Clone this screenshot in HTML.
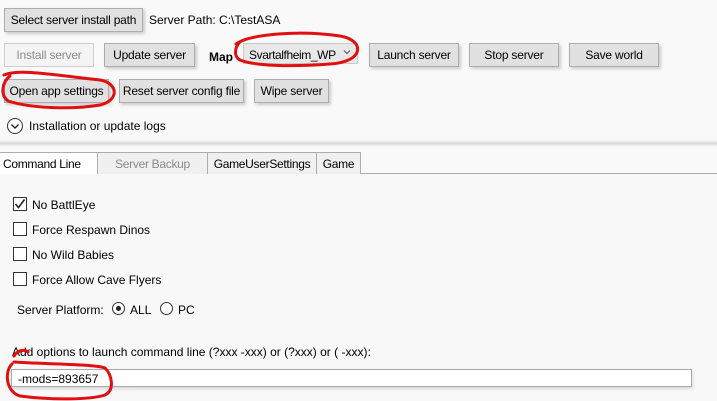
<!DOCTYPE html>
<html><head><meta charset="utf-8"><style>
*{margin:0;padding:0;box-sizing:border-box}
body{width:717px;height:401px;background:#f9f9f9;font-family:"Liberation Sans",sans-serif;font-size:12px;color:#000;position:relative;overflow:hidden}
.a{position:absolute;white-space:nowrap}
.b{position:absolute;background:#e1e1e1;border:1px solid #adadad;display:flex;align-items:center;justify-content:center;box-shadow:2px 2px 3px rgba(0,0,0,.18);font-size:12px;letter-spacing:-.2px}
.dis{background:#f4f4f4;border-color:#cfcfcf;color:#8d8d8d;box-shadow:none}
.cb{position:absolute;width:14px;height:14px;border:1px solid #333;background:#fff;left:13px}
.t{position:absolute;top:152px;height:22px;border:1px solid #adadad;border-bottom:none;background:#f0f0f0;display:flex;align-items:center;justify-content:center;font-size:12px;letter-spacing:-.3px}
</style></head><body>
<div class="b" style="left:4px;top:8px;width:139px;height:24px">Select server install path</div>
<div class="a" style="left:149px;top:13px">Server Path: C:\TestASA</div>

<div class="b dis" style="left:4px;top:43px;width:90px;height:24px">Install server</div>
<div class="b" style="left:104px;top:43px;width:91px;height:24px">Update server</div>
<div class="a" style="left:209px;top:50px;font-weight:bold">Map</div>
<div class="a" style="left:243px;top:43px;width:115px;height:21px;background:#e8e8e8;border:1px solid #c9c9c9;padding:4px 0 0 5px;letter-spacing:-.4px">Svartalfheim_WP</div>
<svg class="a" style="left:343px;top:49px" width="8" height="6"><path d="M1 1.5 L4 4.5 L7 1.5" fill="none" stroke="#555" stroke-width="1"/></svg>
<div class="b" style="left:369px;top:43px;width:90px;height:24px">Launch server</div>
<div class="b" style="left:469px;top:43px;width:90px;height:24px">Stop server</div>
<div class="b" style="left:569px;top:43px;width:90px;height:24px">Save world</div>

<div class="b" style="left:4px;top:79px;width:105px;height:24px">Open app settings</div>
<div class="b" style="left:119px;top:79px;width:125px;height:24px">Reset server config file</div>
<div class="b" style="left:254px;top:79px;width:75px;height:24px">Wipe server</div>

<div class="a" style="left:7px;top:118px;width:16px;height:16px;border:1px solid #333;border-radius:50%;background:#fff"></div>
<svg class="a" style="left:7px;top:118px" width="16" height="16"><path d="M4.5 6.5 L8 10 L11.5 6.5" fill="none" stroke="#222" stroke-width="1.4"/></svg>
<div class="a" style="left:29px;top:119px">Installation or update logs</div>

<div class="a" style="left:0;top:140px;width:717px;height:6px;background:linear-gradient(#f9f9f9,#d8d8d8 60%,#f5f5f5)"></div>

<div class="a" style="left:0;top:173px;width:717px;height:1px;background:#adadad"></div>
<div class="t" style="left:0;width:98px;background:#fff;border-left:none;height:23px;justify-content:flex-start;padding-left:3px">Command Line</div>
<div class="t" style="left:97px;width:111px;color:#8a8a8a">Server Backup</div>
<div class="t" style="left:207px;width:110px">GameUserSettings</div>
<div class="t" style="left:316px;width:45px">Game</div>
<div class="a" style="left:0;top:174px;width:717px;height:227px;background:#f8f8f8"></div>

<div class="cb" style="top:197px"></div>
<svg class="a" style="left:13px;top:197px" width="14" height="14"><path d="M2.5 7 L5.5 10.5 L11.5 2.5" fill="none" stroke="#222" stroke-width="1.6"/></svg>
<div class="a" style="left:32px;top:198px">No BattlEye</div>
<div class="cb" style="top:222px"></div>
<div class="a" style="left:32px;top:223px">Force Respawn Dinos</div>
<div class="cb" style="top:247px"></div>
<div class="a" style="left:32px;top:248px">No Wild Babies</div>
<div class="cb" style="top:272px"></div>
<div class="a" style="left:32px;top:273px">Force Allow Cave Flyers</div>

<div class="a" style="left:17px;top:303px">Server Platform:</div>
<div class="a" style="left:112px;top:302px;width:13px;height:13px;border:1px solid #333;border-radius:50%;background:#fff"></div>
<div class="a" style="left:116px;top:306px;width:5px;height:5px;border-radius:50%;background:#222"></div>
<div class="a" style="left:130px;top:303px">ALL</div>
<div class="a" style="left:160px;top:302px;width:13px;height:13px;border:1px solid #333;border-radius:50%;background:#fff"></div>
<div class="a" style="left:178px;top:303px">PC</div>

<div class="a" style="left:12px;top:345px">Add options to launch command line (?xxx -xxx) or (?xxx) or ( -xxx):</div>
<div class="a" style="left:11px;top:369px;width:681px;height:18px;background:#fff;border:1px solid #aaa;box-shadow:1px 2px 3px rgba(0,0,0,.12);padding:2px 0 0 6px">-mods=893657</div>

<svg class="a" style="left:0;top:0" width="717" height="401">
<g fill="none" stroke="#e01010" stroke-width="3" stroke-linecap="round">
<path d="M236 44 C250 34 300 30 340 36 C365 40 365 62 330 64 C290 67 255 66 240 60 C234 57 234 48 240 42"/>
<path d="M4 75 C20 68 60 76 100 80 C118 83 120 100 100 105 C70 110 30 108 8 101 C0 95 2 82 10 76"/>
<path d="M14 356 C18 350 24 349 28 352 M12 364 C4 372 6 392 20 396 C50 400 90 400 105 395 C115 390 112 375 105 368 C95 364 40 364 14 362"/>
</g></svg>
</body></html>
